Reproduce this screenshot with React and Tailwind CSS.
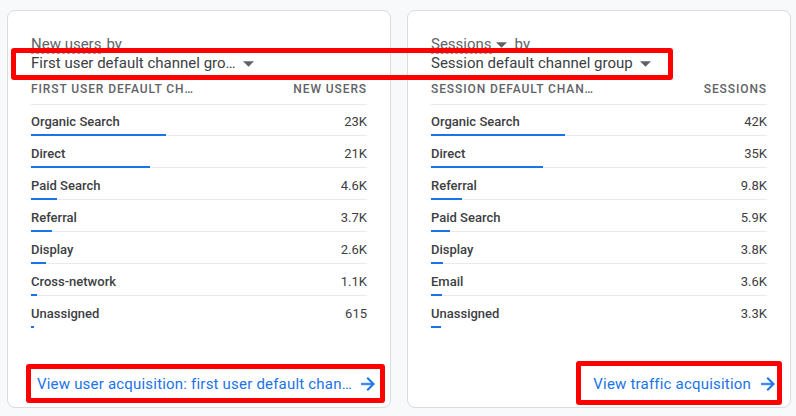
import React from "react";

const left = {
  title: "New users",
  titleHasCaret: false,
  dim: "First user default channel gro…",
  colA: "FIRST USER DEFAULT CH…",
  colB: "NEW USERS",
  rows: [
    ["Organic Search", "23K", 135],
    ["Direct", "21K", 119],
    ["Paid Search", "4.6K", 26],
    ["Referral", "3.7K", 21],
    ["Display", "2.6K", 15],
    ["Cross-network", "1.1K", 6],
    ["Unassigned", "615", 3],
  ],
  link: "View user acquisition: first user default chan…",
  linkFull: true,
};

const right = {
  title: "Sessions",
  titleHasCaret: true,
  dim: "Session default channel group",
  colA: "SESSION DEFAULT CHAN…",
  colB: "SESSIONS",
  rows: [
    ["Organic Search", "42K", 134],
    ["Direct", "35K", 112],
    ["Referral", "9.8K", 31],
    ["Paid Search", "5.9K", 19],
    ["Display", "3.8K", 12],
    ["Email", "3.6K", 11],
    ["Unassigned", "3.3K", 10],
  ],
  link: "View traffic acquisition",
  linkFull: false,
};

function Caret({ className = "" }) {
  return (
    <svg width="11" height="6" viewBox="0 0 10 5" className={className}>
      <path d="M0 0 L10 0 L5 5 Z" fill="#5f6368" />
    </svg>
  );
}

function Arrow() {
  return (
    <svg width="20" height="20" viewBox="0 0 24 24" className="shrink-0">
      <path
        d="M12 4l-1.41 1.41L16.17 11H4v2h12.17l-5.58 5.59L12 20l8-8z"
        fill="#1a73e8"
        stroke="#1a73e8"
        strokeWidth="0.6"
      />
    </svg>
  );
}

function Card({ d }) {
  return (
    <div className="w-[384px] h-[398px] bg-white border border-[#dadce0] rounded-[8px] pt-[24px] px-[23px] flex flex-col">
      <div className="text-[15px] leading-[19px] text-[#5f6368] flex items-center">
        <span className="border-b border-dashed border-[#9aa0a6] leading-[17px]">{d.title}</span>
        {d.titleHasCaret && <Caret className="ml-[4px] mr-[3px]" />}
        <span className="ml-[5px]">by</span>
      </div>
      <div className="text-[15px] leading-[19px] text-[#3c4043] flex items-center">
        <span>{d.dim}</span>
        <Caret className="ml-[7px]" />
      </div>
      <div className="flex justify-between items-center h-[24px] mt-[4px] text-[12px] tracking-[0.9px] font-medium text-[#5f6368]">
        <span>{d.colA}</span>
        <span>{d.colB}</span>
      </div>
      <div className="h-px bg-[#e8eaed] mt-[3px]" />
      <div className="flex flex-col">
        {d.rows.map(([name, val, w], i) => (
          <div key={name} className="h-[32px] flex flex-col">
            <div className="flex justify-between items-center h-[29px] pt-[4px] text-[13px] text-[#3c4043]">
              <span className="font-medium">{name}</span>
              <span>{val}</span>
            </div>
            <div className="relative h-[3px]">
              {i < d.rows.length - 1 && (
                <div className="absolute left-0 right-0 top-[1px] h-px bg-[#e8eaed]" />
              )}
              <div
                className="absolute left-0 top-0 h-[2px] bg-[#1a73e8]"
                style={{ width: w }}
              />
            </div>
          </div>
        ))}
      </div>
      <div className="flex-1" />
      <div
        className={
          d.linkFull
            ? "flex items-center justify-between pl-[6px] mr-[-11px] mb-[13px] h-[20px]"
            : "flex items-center justify-end mr-[-11px] mb-[13px] h-[20px]"
        }
      >
        <span className="text-[15px] text-[#1a73e8] tracking-[0.2px]">{d.link}</span>
        <span className={d.linkFull ? "" : "ml-[7px]"}>
          <Arrow />
        </span>
      </div>
    </div>
  );
}

export default function App() {
  return (
    <div
      className="relative w-[796px] h-[416px] bg-[#f8f9fa] overflow-hidden"
      style={{ fontFamily: "Roboto, 'Liberation Sans', sans-serif" }}
    >
      <div className="flex gap-[16px] pl-[7px] pt-[10px]">
        <Card d={left} />
        <Card d={right} />
      </div>
      <div className="absolute left-[11px] top-[48px] w-[662px] h-[32px] border-[5px] border-[#ff0000] rounded-[3px]" />
      <div className="absolute left-[26px] top-[364px] w-[359px] h-[39px] border-[5px] border-[#ff0000] rounded-[3px]" />
      <div className="absolute left-[576px] top-[361px] w-[206px] h-[44px] border-[5px] border-[#ff0000] rounded-[3px]" />
    </div>
  );
}
